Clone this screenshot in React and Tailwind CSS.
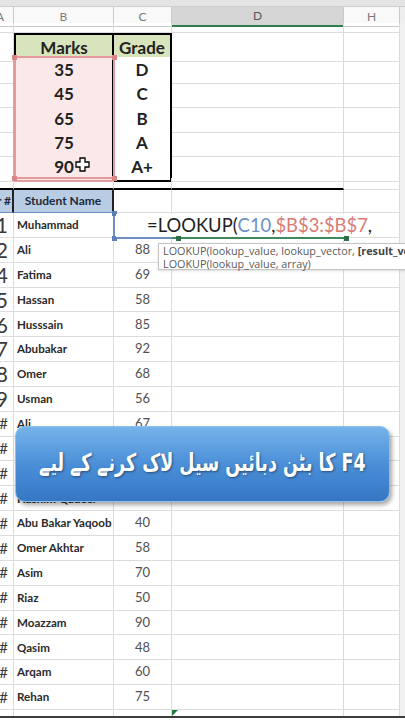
import React from 'react';

const GRID = 'grid grid-cols-[14px_100px_58px_172px_56px_5px]';

const marks = [
  ['35', 'D'],
  ['45', 'C'],
  ['65', 'B'],
  ['75', 'A'],
  ['90', 'A+'],
];

const students = [
  ['1', 'Muhammad', ''],
  ['2', 'Ali', '88'],
  ['4', 'Fatima', '69'],
  ['5', 'Hassan', '58'],
  ['6', 'Husssain', '85'],
  ['7', 'Abubakar', '92'],
  ['8', 'Omer', '68'],
  ['9', 'Usman', '56'],
  ['#', 'Ali', '67'],
  ['#', 'Ahmed', '72'],
  ['#', 'Bilal', '64'],
  ['#', 'Hashim Qadeer', '55'],
  ['#', 'Abu Bakar Yaqoob', '40'],
  ['#', 'Omer Akhtar', '58'],
  ['#', 'Asim', '70'],
  ['#', 'Riaz', '50'],
  ['#', 'Moazzam', '90'],
  ['#', 'Qasim', '48'],
  ['#', 'Arqam', '60'],
  ['#', 'Rehan', '75'],
];

// plain grid cell with light gridlines
const cell = 'flex items-center overflow-hidden border-r border-b border-[#dcdcdc]';

const Handle = ({ x, y, color }) => (
  <div
    className={`absolute w-[5px] h-[5px] ${color}`}
    style={{ left: x - 2, top: y - 2 }}
  />
);

const App = () => {
  return (
    <div className="relative w-[405px] h-[720px] overflow-hidden bg-white font-['Lato',sans-serif]">
      {/* top strip */}
      <div className="h-[7px] bg-[#e4e4e4] border-b border-[#cdcdcd]" />

      {/* column headers */}
      <div className={`${GRID} h-[16px] text-[12px] text-[#7a7a7a] bg-[#f9f9f9]`}>
        <div className="flex items-center overflow-hidden border-r border-b border-[#c9c9c9]">
          <span className="-ml-[4px]">A</span>
        </div>
        <div className="flex items-center justify-center border-r border-b border-[#c9c9c9]">B</div>
        <div className="flex items-center justify-center border-r border-b border-[#c9c9c9]">C</div>
        <div className="flex items-center justify-center bg-[#d6d6d6] border-r border-r-[#c9c9c9] border-b-2 border-b-[#2f7d4f] text-[#555]">D</div>
        <div className="flex items-center justify-center border-r border-b border-[#c9c9c9]">H</div>
        <div className="bg-[#eeeeee] border-b border-[#c9c9c9]" />
      </div>

      {/* partial row above the table */}
      <div className={`${GRID} h-[10px]`}>
        <div className={cell} />
        <div className={cell} />
        <div className={cell} />
        <div className={cell} />
        <div className={cell} />
        <div className="bg-[#f1f1f1]" />
      </div>

      {/* Marks / Grade table */}
      <div className={`${GRID} h-[24px] text-[17px] font-bold text-[#222]`}>
        <div className={cell} />
        <div className="flex items-center justify-center bg-[#d8e4bc] border-t-2 border-l-2 border-r-2 border-b border-black">Marks</div>
        <div className="flex items-center justify-center bg-[#d8e4bc] border-t-2 border-r-2 border-b border-black">Grade</div>
        <div className={cell} />
        <div className={cell} />
        <div className="bg-[#f1f1f1]" />
      </div>
      {marks.map(([m, g], i) => {
        const last = i === marks.length - 1;
        return (
          <div key={m} className={`${GRID} ${i === 1 ? 'h-[25px]' : 'h-[24px]'} text-[17px] font-bold text-[#222]`}>
            <div className={cell} />
            <div className={`flex items-center justify-center bg-[#fbe9e9] border-l-2 border-l-[#e39b9b] border-r-2 border-r-black ${last ? 'border-b-2 border-b-[#e39b9b]' : 'border-b border-b-[#6d6d6d]'}`}>
              <span className="relative">
                {m}
                {last && (
                  <svg className="absolute left-[21px] top-[3px]" width="15" height="15" viewBox="0 0 15 15">
                    <path d="M5 1h5v4h4v5h-4v4H5v-4H1V5h4z" fill="white" stroke="black" strokeWidth="1.3" />
                  </svg>
                )}
              </span>
            </div>
            <div className={`flex items-center justify-center bg-white border-r-2 border-black ${last ? 'border-b-2' : 'border-b'}`}>{g}</div>
            <div className={cell} />
            <div className={cell} />
            <div className="bg-[#f1f1f1]" />
          </div>
        );
      })}

      {/* gap row with heavy bottom rule */}
      <div className={`${GRID} h-[12px]`}>
        <div className="border-r border-r-[#dcdcdc] border-b-2 border-b-black" />
        <div className="border-r border-r-[#dcdcdc] border-b-2 border-b-black" />
        <div className="border-r border-r-[#dcdcdc] border-b-2 border-b-black" />
        <div className="border-r border-r-[#dcdcdc] border-b-2 border-b-black" />
        <div className={cell} />
        <div className="bg-[#f1f1f1]" />
      </div>

      {/* Student Name header */}
      <div className={`${GRID} h-[23px] text-[12px] font-bold text-[#1d2a3a]`}>
        <div className="flex items-center justify-end overflow-hidden bg-[#b8cce4] border-r-2 border-r-[#222] border-b border-b-[#6f8fbf]">
          <span className="pr-[1px] whitespace-nowrap">r #</span>
        </div>
        <div className="flex items-center justify-center bg-[#b8cce4] border-r-2 border-r-[#222] border-b border-b-[#6f8fbf]">Student Name</div>
        <div className={cell} />
        <div className={cell} />
        <div className={cell} />
        <div className="bg-[#f1f1f1]" />
      </div>

      {/* student rows */}
      {students.map(([n, name, mark], i) => (
        <div key={i} className={`${GRID} h-[24.85px]`}>
          <div className={`${cell} justify-end`}>
            <span className={`pr-[5px] text-[#3a3a3a] ${n === '#' ? 'text-[15px]' : 'text-[21px]'}`}>{n}</span>
          </div>
          <div className={`${cell} pl-[3px] text-[11.6px] font-bold text-[#2a2a2a] whitespace-nowrap`}>{name}</div>
          <div className={`${cell} justify-center text-[13px] text-[#505050]`}>{mark}</div>
          <div className={cell} />
          <div className={cell} />
          <div className="bg-[#f1f1f1]" />
        </div>
      ))}

      {/* partial last row and bottom edge */}
      <div className={`${GRID} h-[6px]`}>
        <div className="border-r border-[#dcdcdc]" />
        <div className="border-r border-[#dcdcdc]" />
        <div className="border-r border-[#dcdcdc]" />
        <div className="border-r border-[#dcdcdc]" />
        <div className="border-r border-[#dcdcdc]" />
        <div className="bg-[#f1f1f1]" />
      </div>
      <div className="h-[2px] bg-[#3c3c3c]" />
      <div className="h-[10px] bg-white" />

      {/* selection around Marks values */}
      <div className="absolute left-[13px] top-[56px] w-[102px] h-[123px] border-2 border-[#e39b9b]" />
      <Handle x={14} y={57} color="bg-[#d98585]" />
      <Handle x={114} y={57} color="bg-[#d98585]" />
      <Handle x={14} y={178} color="bg-[#d98585]" />
      <Handle x={114} y={178} color="bg-[#d98585]" />

      {/* C10 reference outline */}
      <div className="absolute left-[113px] top-[213px] w-[60px] h-[26px] border-l-2 border-b-2 border-[#6f8fc4]" />
      <Handle x={114} y={213} color="bg-[#5d7fb8]" />
      <Handle x={114} y={238} color="bg-[#5d7fb8]" />

      {/* formula being typed */}
      <div className="absolute left-[116px] top-[214px] w-[262px] h-[23px] bg-white flex items-center pl-[31px] text-[18.4px] text-[#222] whitespace-nowrap">
        =LOOKUP(<span className="text-[#6d8fc6]">C10</span>,<span className="text-[#d97b74]">$B$3:$B$7</span>,
      </div>
      <div className="absolute left-[172px] top-[237px] w-[174px] h-[2px] bg-[#3f8a5c]" />
      <Handle x={178} y={238} color="bg-[#2f6f48]" />
      <Handle x={346} y={238} color="bg-[#2f6f48]" />

      {/* function tooltip */}
      <div className="absolute left-[158px] top-[243px] w-[260px] h-[27px] bg-white border border-[#c4c4c4] shadow-sm px-[4px] pt-[1px] text-[10.8px] leading-[12.5px] text-[#5a5a5a] whitespace-nowrap font-['Open_Sans',sans-serif]">
        <div>LOOKUP(lookup_value, lookup_vector, <span className="font-bold text-[#444]">[result_vector]</span>)</div>
        <div>LOOKUP(lookup_value, array)</div>
      </div>

      {/* error-check triangle */}
      <svg className="absolute left-[172px] top-[710px]" width="6" height="6" viewBox="0 0 6 6">
        <path d="M0 0h6L0 6z" fill="#1f7a3f" />
      </svg>

      {/* Urdu caption banner */}
      <div className="absolute left-[15px] top-[426px] w-[375px] h-[76px] overflow-hidden rounded-[10px] border border-[#8dbfeb] bg-gradient-to-b from-[#76b3ea] via-[#4b8fd8] to-[#3677c4] shadow-[2px_3px_4px_rgba(0,0,0,0.35)] flex items-center justify-center">
        <p dir="rtl" className="text-white text-[17.5px] leading-none font-bold font-['DejaVu_Sans',sans-serif] scale-y-[1.4] [text-shadow:1px_1px_2px_rgba(0,0,0,0.45)] whitespace-nowrap">
          F4 کا بٹن دبائیں سیل لاک کرنے کے لیے
        </p>
      </div>
    </div>
  );
};

export default App;
